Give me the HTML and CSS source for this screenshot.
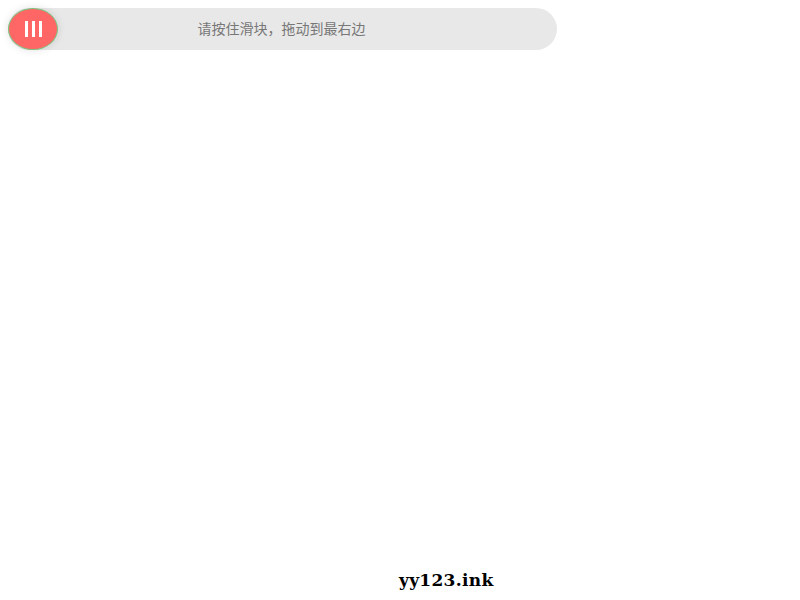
FILE: index.html
```html
<!DOCTYPE html>
<html lang="zh">
<head>
<meta charset="utf-8">
<link rel="stylesheet" href="styles.css">
</head>
<body>
<div class="slider">
  <div class="knob"><span class="line"></span><span class="line"></span><span class="line"></span></div>
  <div class="label">请按住滑块，拖动到最右边</div>
</div>
<div class="footer">yy123.ink</div>
</body>
</html>
```
FILE: styles.css
```css
html, body { margin: 0; padding: 0; background: #fff; }
body { width: 800px; height: 600px; position: relative; font-family: "Noto Sans CJK SC", "Liberation Sans", sans-serif; }
.slider {
  margin: 8px 0 0 8px;
  width: 549px;
  height: 42px;
  border-radius: 21px;
  background: #e8e8e8;
  position: relative;
  display: flex;
  align-items: center;
  justify-content: center;
}
.knob {
  position: absolute;
  left: 0;
  top: 0;
  width: 48px;
  height: 40px;
  border: 1px solid #7cc47f;
  border-radius: 50%;
  background: #ff6666;
  box-shadow: 0 0 8px rgba(0,0,0,0.12);
  display: flex;
  align-items: center;
  justify-content: center;
  gap: 4px;
}
.line { width: 3px; height: 16px; background: #fff; }
.label { font-size: 14px; line-height: 14px; color: #777; margin: -3px 0 0 -2px; }
.footer {
  position: absolute;
  left: 399px;
  top: 570px;
  font-family: "DejaVu Serif", serif;
  font-weight: bold;
  font-size: 17px;
  letter-spacing: 0.3px;
  color: #000;
}
```
